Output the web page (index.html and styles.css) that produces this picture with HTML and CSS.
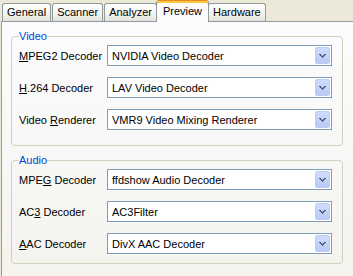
FILE: index.html
```html
<!DOCTYPE html>
<html>
<head>
<meta charset="utf-8">
<link rel="stylesheet" href="styles.css">
</head>
<body>
<div class="tabs">
  <div class="tab">General</div>
  <div class="tab">Scanner</div>
  <div class="tab">Analyzer</div>
  <div class="tab tab-active">Preview</div>
  <div class="tab">Hardware</div>
</div>
<div class="panel">
  <fieldset class="group group-video">
    <legend class="legend">Video</legend>
    <div class="row">
      <span class="label"><u>M</u>PEG2 Decoder</span>
      <div class="combo"><span class="combo-text">NVIDIA Video Decoder</span><span class="combo-btn"><svg width="7" height="4" viewBox="0 0 7 4"><path d="M0 0h2v1h1v1h1v-1h1v-1h2v1h-1v1h-1v1h-1v1h-1v-1h-1v-1h-1v-1h-1z" fill="#4d6185" shape-rendering="crispEdges"/></svg></span></div>
    </div>
    <div class="row">
      <span class="label"><u>H</u>.264 Decoder</span>
      <div class="combo"><span class="combo-text">LAV Video Decoder</span><span class="combo-btn"><svg width="7" height="4" viewBox="0 0 7 4"><path d="M0 0h2v1h1v1h1v-1h1v-1h2v1h-1v1h-1v1h-1v1h-1v-1h-1v-1h-1v-1h-1z" fill="#4d6185" shape-rendering="crispEdges"/></svg></span></div>
    </div>
    <div class="row">
      <span class="label">Video <u>R</u>enderer</span>
      <div class="combo"><span class="combo-text">VMR9 Video Mixing Renderer</span><span class="combo-btn"><svg width="7" height="4" viewBox="0 0 7 4"><path d="M0 0h2v1h1v1h1v-1h1v-1h2v1h-1v1h-1v1h-1v1h-1v-1h-1v-1h-1v-1h-1z" fill="#4d6185" shape-rendering="crispEdges"/></svg></span></div>
    </div>
  </fieldset>
  <fieldset class="group group-audio">
    <legend class="legend">Audio</legend>
    <div class="row">
      <span class="label">MPE<u>G</u> Decoder</span>
      <div class="combo"><span class="combo-text">ffdshow Audio Decoder</span><span class="combo-btn"><svg width="7" height="4" viewBox="0 0 7 4"><path d="M0 0h2v1h1v1h1v-1h1v-1h2v1h-1v1h-1v1h-1v1h-1v-1h-1v-1h-1v-1h-1z" fill="#4d6185" shape-rendering="crispEdges"/></svg></span></div>
    </div>
    <div class="row">
      <span class="label">AC<u>3</u> Decoder</span>
      <div class="combo"><span class="combo-text">AC3Filter</span><span class="combo-btn"><svg width="7" height="4" viewBox="0 0 7 4"><path d="M0 0h2v1h1v1h1v-1h1v-1h2v1h-1v1h-1v1h-1v1h-1v-1h-1v-1h-1v-1h-1z" fill="#4d6185" shape-rendering="crispEdges"/></svg></span></div>
    </div>
    <div class="row">
      <span class="label"><u>A</u>AC Decoder</span>
      <div class="combo"><span class="combo-text">DivX AAC Decoder</span><span class="combo-btn"><svg width="7" height="4" viewBox="0 0 7 4"><path d="M0 0h2v1h1v1h1v-1h1v-1h2v1h-1v1h-1v1h-1v1h-1v-1h-1v-1h-1v-1h-1z" fill="#4d6185" shape-rendering="crispEdges"/></svg></span></div>
    </div>
  </fieldset>
</div>
</body>
</html>
```
FILE: styles.css
```css
html, body {
  margin: 0;
  padding: 0;
  overflow: hidden;
}
body {
  background: #ece9d8;
  font-family: "Liberation Sans", Arial, sans-serif;
  font-size: 11px;
  color: #000;
  width: 353px;
  height: 276px;
}
.tabs {
  display: flex;
  align-items: flex-end;
  height: 21px;
  padding-left: 2px;
}
.tab {
  box-sizing: border-box;
  height: 18px;
  padding: 2px 4px 0 4px;
  margin-right: 1px;
  border: 1px solid #919b9c;
  border-bottom: none;
  border-radius: 3px 3px 0 0;
  background: linear-gradient(#ffffff, #f3f3ef 60%, #e3e2da);
  line-height: 13px;
  white-space: nowrap;
}
.tab-active {
  position: relative;
  z-index: 1;
  height: 22px;
  margin: 0 -1px -1px -2px;
  padding: 4px 6px 0 6px;
  border-top: 1px solid #e68b2c;
  box-shadow: inset 0 2px #ffc73c;
  background: #fcfcfe;
}
.panel {
  box-sizing: border-box;
  margin-left: 1px;
  height: 255px;
  border-top: 1px solid #919b9c;
  border-left: 1px solid #919b9c;
  background: linear-gradient(#fcfcfe, #f4f3ee);
  padding: 8px 0 0 9px;
}
.group {
  box-sizing: border-box;
  width: 332px;
  margin: 0;
  border: 1px solid #d0d0bf;
  border-radius: 4px;
  padding: 2px 0 0 7px;
  display: flex;
  flex-direction: column;
  gap: 11px;
}
.group-video {
  padding-bottom: 15px;
}
.group-audio {
  margin-top: 8px;
  padding-bottom: 9px;
}
.legend {
  padding: 0;
  color: #0046d5;
  line-height: 13px;
}
.row {
  display: grid;
  grid-template-columns: 88px 225px;
  align-items: center;
}
.label {
  white-space: nowrap;
}
.combo {
  box-sizing: border-box;
  height: 21px;
  border: 1px solid #7f9db9;
  background: #fff;
  display: flex;
  align-items: center;
  justify-content: space-between;
  padding: 1px;
}
.combo-text {
  padding-left: 3px;
  white-space: nowrap;
}
.combo-btn {
  box-sizing: border-box;
  width: 15px;
  height: 17px;
  border: 1px solid #bccbf0;
  border-radius: 2px;
  background: linear-gradient(#cfdcfb, #b9cbf6);
  display: flex;
  align-items: center;
  justify-content: center;
}
.combo-btn svg {
  display: block;
}
```
